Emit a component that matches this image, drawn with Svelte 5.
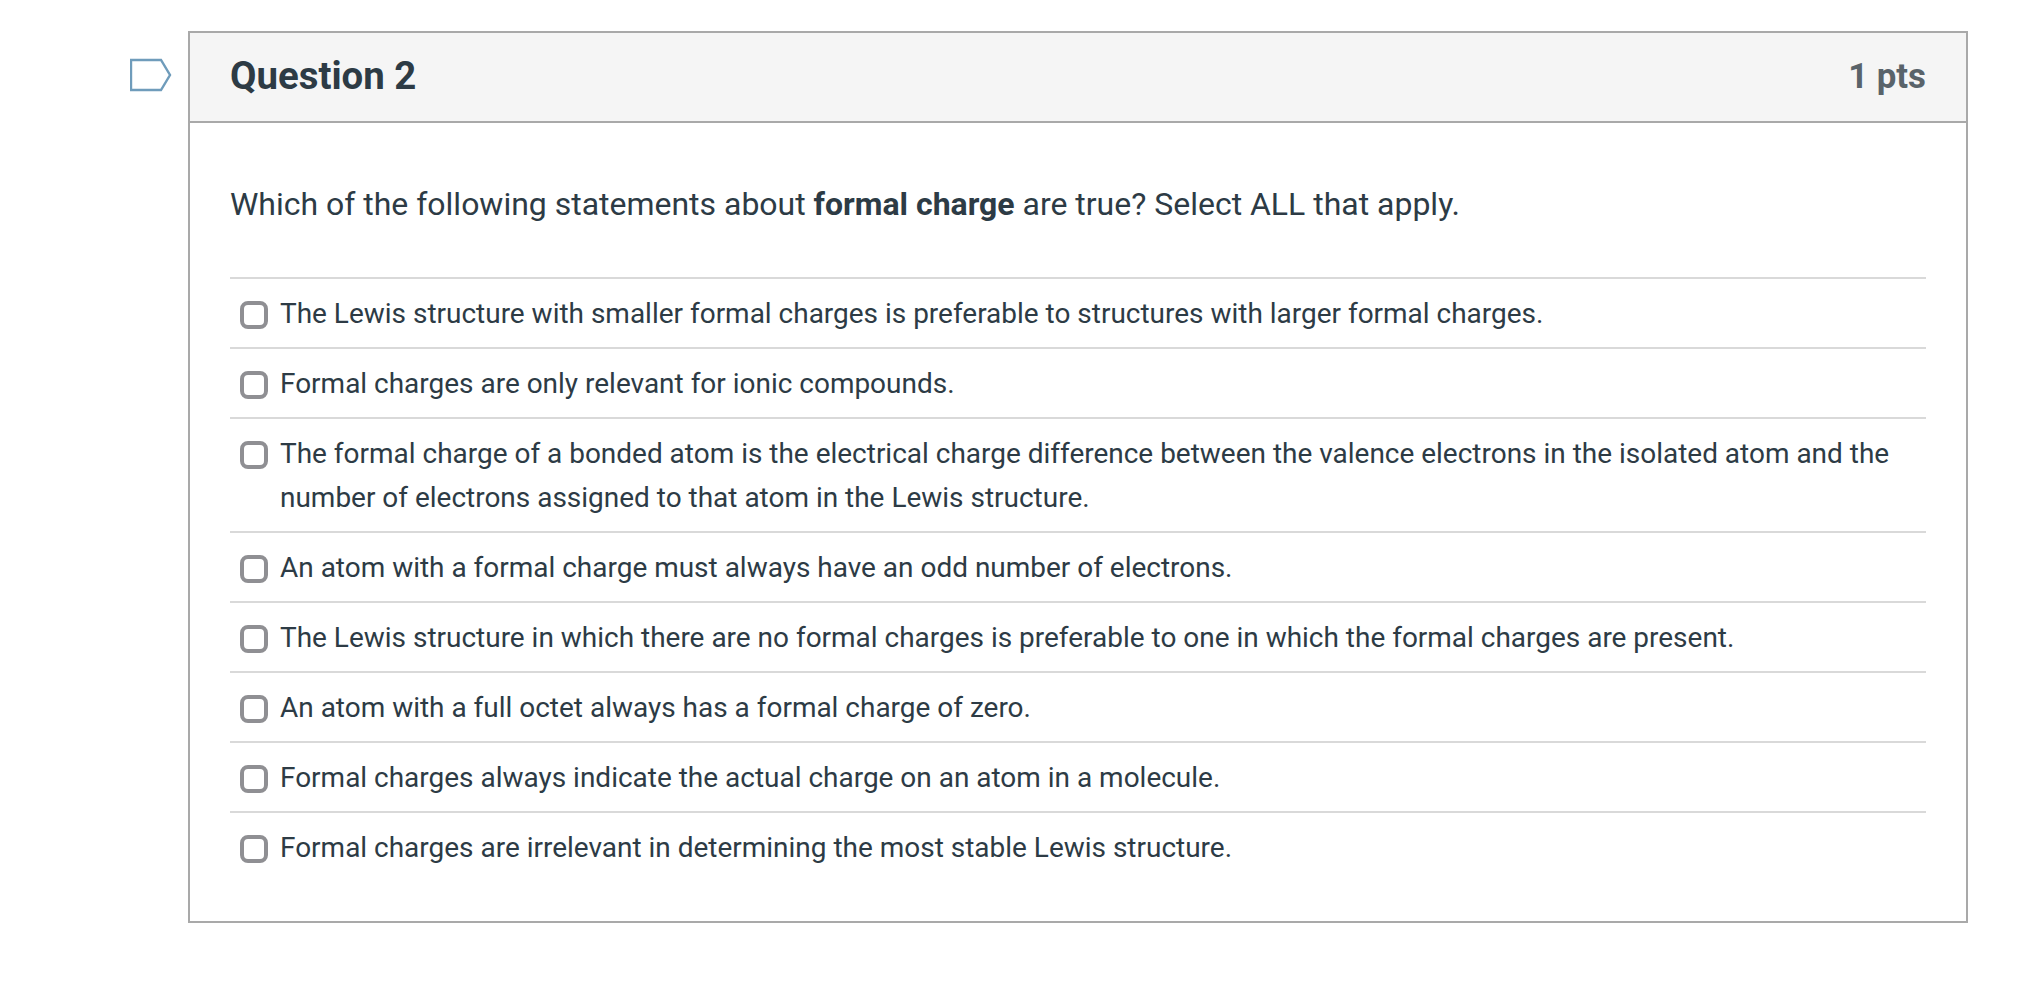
<script>
	const answers = [
		'The Lewis structure with smaller formal charges is preferable to structures with larger formal charges.',
		'Formal charges are only relevant for ionic compounds.',
		'The formal charge of a bonded atom is the electrical charge difference between the valence electrons in the isolated atom and the number of electrons assigned to that atom in the Lewis structure.',
		'An atom with a formal charge must always have an odd number of electrons.',
		'The Lewis structure in which there are no formal charges is preferable to one in which the formal charges are present.',
		'An atom with a full octet always has a formal charge of zero.',
		'Formal charges always indicate the actual charge on an atom in a molecule.',
		'Formal charges are irrelevant in determining the most stable Lewis structure.'
	];
</script>

<div class="page">
	<svg class="flag" width="42" height="34" viewBox="0 0 42 34" aria-hidden="true">
		<path d="M1 2H31L40 17L31 32H1Z" fill="none" stroke="#6f9cbb" stroke-width="2.4" />
	</svg>

	<section class="question">
		<header>
			<h2>Question 2</h2>
			<span class="pts">1 pts</span>
		</header>
		<div class="body">
			<p class="prompt">Which of the following statements about <strong>formal charge</strong> are true? Select ALL that apply.</p>
			<ul>
				{#each answers as answer}
					<li>
						<span class="box"></span>
						<span class="text">{answer}</span>
					</li>
				{/each}
			</ul>
		</div>
	</section>
</div>

<style>
	:global(body) {
		background: #fff;
		font-family: Roboto, 'Liberation Sans', sans-serif;
		color: #2d3b45;
	}
	.page {
		display: flex;
		align-items: flex-start;
		gap: 16px;
		padding: 31px 63px 0 130px;
	}
	.flag {
		flex: none;
		margin-top: 27px;
	}
	.question {
		flex: 1;
		border: 2px solid #a9a9a9;
	}
	header {
		display: flex;
		justify-content: space-between;
		align-items: center;
		box-sizing: border-box;
		height: 90px;
		padding: 0 40px 4px;
		background: #f5f5f5;
		border-bottom: 2px solid #a9a9a9;
	}
	h2 {
		margin: 0;
		font-size: 38.4px;
		font-weight: 700;
	}
	.pts {
		padding-top: 2px;
		font-size: 34.8px;
		font-weight: 700;
		color: #59636a;
	}
	.body {
		padding: 58px 40px 40px;
	}
	.prompt {
		margin: 0 0 50px;
		font-size: 31.97px;
		line-height: 46px;
	}
	ul {
		list-style: none;
		margin: 0;
		padding: 0;
	}
	li {
		display: flex;
		gap: 12px;
		padding: 13px 10px 11px;
		border-top: 2px solid #d9d9d9;
		font-size: 27.97px;
		line-height: 44px;
	}
	.box {
		flex: none;
		width: 28px;
		height: 28px;
		box-sizing: border-box;
		margin-top: 9px;
		border: 4px solid #8f8f93;
		border-radius: 8px;
	}
</style>
